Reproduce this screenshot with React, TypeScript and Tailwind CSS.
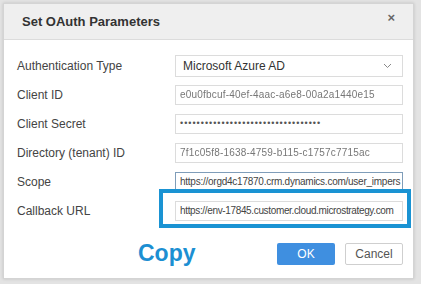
import React from "react";

const rows: { label: string; value: string; kind?: "select" | "secret" | "focus" | "obscured" }[] = [
  { label: "Authentication Type", value: "Microsoft Azure AD", kind: "select" },
  { label: "Client ID", value: "e0u0fbcuf-40ef-4aac-a6e8-00a2a1440e15", kind: "obscured" },
  { label: "Client Secret", value: "••••••••••••••••••••••••••••••••••", kind: "secret" },
  { label: "Directory (tenant) ID", value: "7f1c05f8-1638-4759-b115-c1757c7715ac", kind: "obscured" },
  { label: "Scope", value: "https://orgd4c17870.crm.dynamics.com/user_impers", kind: "focus" },
  { label: "Callback URL", value: "https://env-17845.customer.cloud.microstrategy.com" },
];

export default function App() {
  return (
    <div className="w-[421px] h-[284px] bg-[#e3e3e3] pl-[3px] pt-[3px] overflow-hidden" style={{ fontFamily: '"Liberation Sans", Arial, sans-serif' }}>
      <div className="relative w-[411px] h-[276px] bg-white border border-[#d4d4d4] shadow-[0_0_3px_rgba(0,0,0,0.15)] flex flex-col">
        <div className="h-[36px] bg-[#efefef] border-b border-[#dcdcdc] flex items-center justify-between pl-[18px] pr-[18px] shrink-0">
          <span className="text-[13px] font-bold text-[#333]">Set OAuth Parameters</span>
          <span className="text-[13px] font-bold text-[#666] leading-none -mt-[8px]">×</span>
        </div>
        <div className="flex flex-col pt-[11px] pl-[13px] pr-[10px]">
          {rows.map((r) => (
            <div key={r.label} className="h-[29px] flex items-center">
              <div className="w-[158px] text-[12px] text-[#444]">{r.label}</div>
              {r.kind === "select" ? (
                <div className="w-[228px] h-[22px] border border-[#dcdcdc] flex items-center justify-between pl-[7px] pr-[10px]">
                  <span className="text-[12px] text-[#333]">Microsoft Azure AD</span>
                  <svg width="9" height="6" viewBox="0 0 9 6"><path d="M1 1l3.5 3.5L8 1" fill="none" stroke="#888" strokeWidth="1" /></svg>
                </div>
              ) : (
                <div className={`w-[228px] h-[20px] border ${r.kind === "focus" ? "border-[#7f9db9]" : "border-[#dcdcdc]"} flex items-center pl-[4px] overflow-hidden whitespace-nowrap`}>
                  <span
                    className={
                      r.kind === "obscured"
                        ? "text-[10px] leading-none text-[#777] tracking-[0.2px]"
                        : r.kind === "secret"
                        ? "text-[9px] leading-none text-[#555] tracking-[1px]"
                        : r.kind === "focus"
                        ? "text-[10px] leading-none text-[#444] tracking-[-0.25px]"
                        : "text-[10px] leading-none text-[#444] tracking-[-0.35px]"
                    }
                    style={r.kind === "obscured" ? { filter: "blur(0.4px)" } : undefined}
                  >
                    {r.value}
                  </span>
                </div>
              )}
            </div>
          ))}
        </div>
        <div className="flex items-center pt-[17px] pr-[10px]">
          <span className="ml-[134px] text-[23px] font-bold text-[#1c8fd2] leading-none">Copy</span>
          <button className="ml-auto w-[58px] h-[22px] bg-[#3f8fe0] text-white text-[12px] rounded-[2px]">OK</button>
          <button className="ml-[10px] w-[58px] h-[22px] bg-white border border-[#cfcfcf] text-[#555] text-[12px] rounded-[2px]">Cancel</button>
        </div>
        <div className="absolute left-[155px] top-[185px] w-[252px] h-[39px] border-[4px] border-[#1a93d3] pointer-events-none" />
      </div>
    </div>
  );
}
